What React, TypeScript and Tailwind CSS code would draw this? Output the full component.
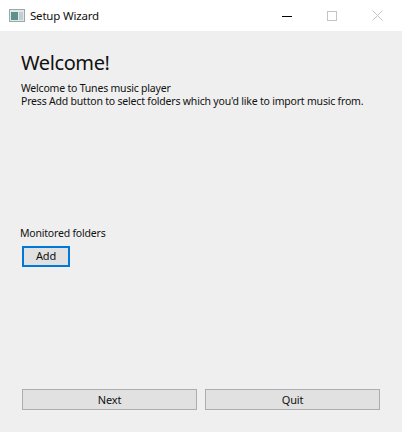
export default function App() {
  return (
    <div className="w-[402px] h-[432px] flex flex-col bg-[#efefef] text-[#111] overflow-hidden font-['Noto_Sans',sans-serif]">
      <div className="h-[31px] shrink-0 bg-white flex items-center">
        <svg className="ml-[9px] shrink-0" width="16" height="13" viewBox="0 0 16 13">
          <rect x="0.5" y="0.5" width="15" height="12" fill="#e3e8e8" stroke="#9aa8aa" />
          <rect x="2" y="3" width="7" height="8" fill="#5d918e" />
          <rect x="10" y="3" width="4" height="8" fill="#c3ced1" />
        </svg>
        <span className="ml-[5px] text-[11.5px] tracking-[-0.2px] leading-none">Setup Wizard</span>
        <div className="ml-auto flex items-center mr-[19px] gap-[35px]">
          <svg width="10" height="10" viewBox="0 0 10 10"><path d="M0 5.5H10" stroke="#000" /></svg>
          <svg width="10" height="10" viewBox="0 0 10 10"><rect x="0.5" y="0.5" width="9" height="9" fill="none" stroke="#c4c4c4" /></svg>
          <svg width="11" height="11" viewBox="0 0 11 11"><path d="M0.5 0.5L10.5 10.5M10.5 0.5L0.5 10.5" stroke="#c4c4c4" /></svg>
        </div>
      </div>
      <div className="flex-1 flex flex-col">
        <h1 className="ml-[21px] mt-[18px] text-[20px] tracking-[-0.4px] leading-[28px] font-normal">Welcome!</h1>
        <p className="ml-[21px] mt-[5px] text-[10.5px] tracking-[-0.2px] leading-[13px] whitespace-nowrap">
          Welcome to Tunes music player
          <br />
          Press Add button to select folders which you'd like to import music from.
        </p>
        <div className="ml-[20px] mt-[118px] text-[10.5px] tracking-[-0.2px] leading-[14px]">Monitored folders</div>
        <button className="ml-[22px] mt-[6px] w-[48px] h-[21px] bg-[#e1e1e1] border-2 border-[#0078d7] text-[11px] tracking-[-0.2px] leading-none pb-[2px]">
          Add
        </button>
        <div className="mt-auto mb-[22px] mx-[22px] flex gap-[8px]">
          <button className="flex-1 h-[21px] bg-[#e1e1e1] border border-[#adadad] text-[11px] tracking-[-0.2px] leading-none">Next</button>
          <button className="flex-1 h-[21px] bg-[#e1e1e1] border border-[#adadad] text-[11px] tracking-[-0.2px] leading-none">Quit</button>
        </div>
      </div>
    </div>
  );
}
